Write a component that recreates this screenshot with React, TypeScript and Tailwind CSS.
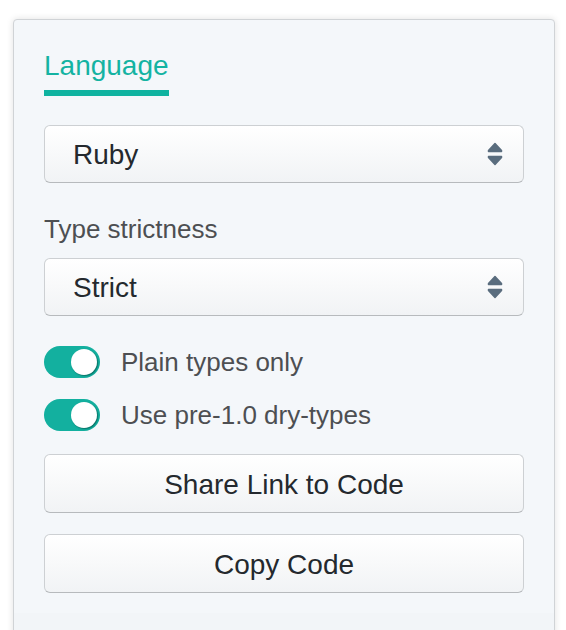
import { useState } from 'react';

const font = { fontFamily: '"Liberation Sans", Arial, sans-serif' };

function UpDown() {
  return (
    <svg width="16" height="24" viewBox="0 0 16 24" className="text-[#5a6d7e]">
      <path d="M8 1.5 L14.5 8.5 L14.5 9.5 L1.5 9.5 L1.5 8.5 Z" fill="currentColor" stroke="currentColor" strokeWidth="1.5" strokeLinejoin="round" />
      <path d="M1.5 14.5 L14.5 14.5 L14.5 15.5 L8 22.5 L1.5 15.5 Z" fill="currentColor" stroke="currentColor" strokeWidth="1.5" strokeLinejoin="round" />
    </svg>
  );
}

function Select({ value }: { value: string }) {
  return (
    <div className="flex h-[58px] items-center justify-between rounded-[6px] border border-[#cdd0d3] border-b-[#b7babd] bg-gradient-to-b from-white to-[#f1f3f5] pl-[28px] pr-[20px] text-[28px] text-[#24292e]">
      <span className="pt-[2px]">{value}</span>
      <UpDown />
    </div>
  );
}

function Toggle({ label }: { label: string }) {
  const [on, setOn] = useState(true);
  return (
    <div className="flex h-[32px] items-center gap-[21px]">
      <button
        onClick={() => setOn(!on)}
        className={`relative h-[32px] w-[56px] rounded-full ${on ? 'bg-[#13b09f]' : 'bg-[#c6cbd0]'}`}
      >
        <span
          className={`absolute top-[3px] h-[26px] w-[26px] rounded-full bg-white shadow-[1px_1px_1.5px_rgba(4,90,80,0.75)] ${on ? 'right-[3px]' : 'left-[3px]'}`}
        />
      </button>
      <span className="text-[26px] leading-[32px] text-[#4d4f52]">{label}</span>
    </div>
  );
}

function Button({ children }: { children: string }) {
  return (
    <button className="flex h-[59px] w-full items-center justify-center rounded-[6px] border border-[#cdd0d3] border-b-[#b7babd] bg-gradient-to-b from-white to-[#f1f3f5] pt-[3px] text-[28px] text-[#24292e]">
      {children}
    </button>
  );
}

export default function App() {
  return (
    <div className="h-[630px] w-[566px] overflow-hidden bg-white pl-[13px] pt-[19px]" style={font}>
      <div className="flex h-[640px] w-[542px] flex-col rounded-[4px] border border-[#d0d3d6] bg-[#f4f7fa] shadow-[0_0_7px_rgba(0,0,0,0.12)]">
        <div className="flex flex-col px-[30px] pt-[28px]">
          <div className="w-fit border-b-[6px] border-[#0fb3a0] pb-[7px] pt-[1px] text-[28px] leading-[34px] text-[#14b3a2]">
            Language
          </div>
          <div className="mt-[29px]">
            <Select value="Ruby" />
          </div>
          <div className="mt-[30px] text-[26px] leading-[32px] text-[#4d4f52]">Type strictness</div>
          <div className="mt-[13px]">
            <Select value="Strict" />
          </div>
          <div className="mt-[30px]">
            <Toggle label="Plain types only" />
          </div>
          <div className="mt-[21px]">
            <Toggle label="Use pre-1.0 dry-types" />
          </div>
          <div className="mt-[23px]">
            <Button>Share Link to Code</Button>
          </div>
          <div className="mt-[21px]">
            <Button>Copy Code</Button>
          </div>
          <div className="h-[20px]" />
        </div>
        <div className="flex-1 bg-[#f2f5f8]" />
      </div>
    </div>
  );
}
